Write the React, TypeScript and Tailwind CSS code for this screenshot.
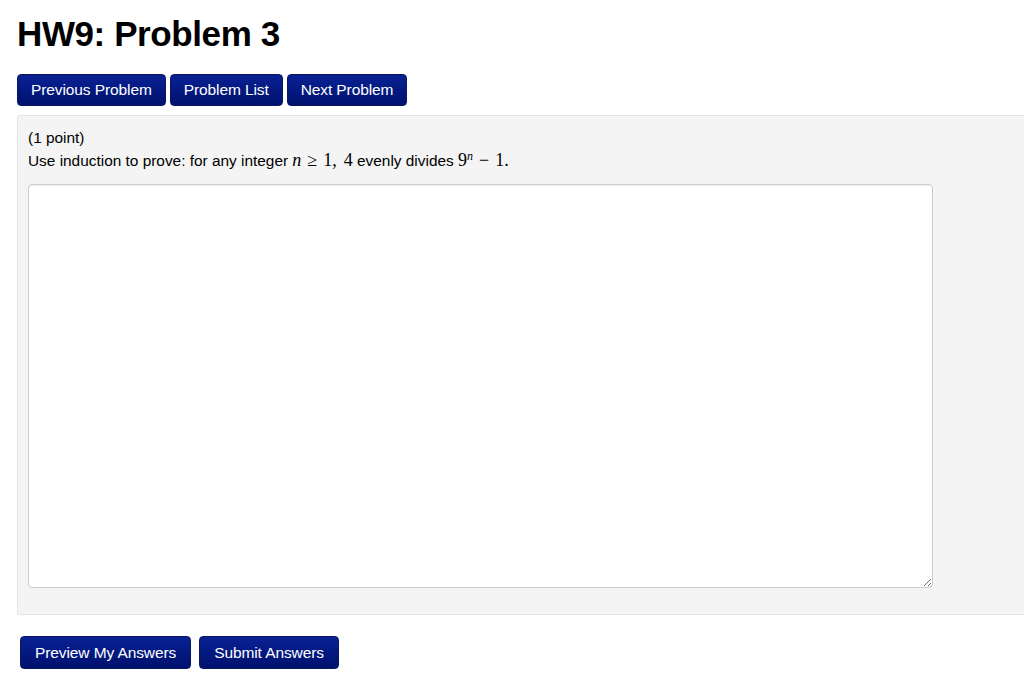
import React from 'react';

const btn =
  'h-[32px] px-[13px] rounded-[4px] border border-[#0a1660] bg-gradient-to-b from-[#0a2194] to-[#00116e] text-white text-[15.5px] leading-none tracking-[-0.1px]';

const App: React.FC = () => {
  return (
    <div className="w-[1024px] h-[674px] overflow-hidden bg-white text-black font-['Liberation_Sans',Arial,sans-serif]">
      <div className="pl-[17px] pt-[12px]">
        <h1 className="text-[35px] font-bold leading-[44px] tracking-[-0.4px]">HW9: Problem 3</h1>

        <div className="flex gap-[4px] mt-[18px]">
          <button className={btn}>Previous Problem</button>
          <button className={btn}>Problem List</button>
          <button className={btn}>Next Problem</button>
        </div>

        <div className="mt-[9px] w-[1020px] h-[500px] bg-[#f4f4f4] border border-[#e3e3e3] rounded-[2px] pl-[10px] pt-[10px]">
          <p className="text-[15.4px] leading-[23px]">(1 point)</p>
          <p className="text-[15.4px] leading-[23px]">
            Use induction to prove: for any integer{' '}
            <span className="font-['Liberation_Serif',serif] text-[18px]">
              <i>n</i>
              <span className="mx-[6px]">≥</span>1,<span className="ml-[7px]">4</span>
            </span>{' '}
            evenly divides{' '}
            <span className="font-['Liberation_Serif',serif] text-[18px]">
              9<sup className="text-[12px] italic">n</sup>
              <span className="mx-[6px]">−</span>1.
            </span>
          </p>
          <textarea className="block mt-[12px] w-[905px] h-[404px] bg-white border border-[#cccccc] rounded-[4px] shadow-[inset_0_1px_1px_rgba(0,0,0,0.08)] outline-none" />
        </div>

        <div className="flex gap-[8px] mt-[21px] pl-[3px]">
          <button className={btn + ' h-[33px] px-[14px]'}>Preview My Answers</button>
          <button className={btn + ' h-[33px] px-[14px]'}>Submit Answers</button>
        </div>
      </div>
    </div>
  );
};

export default App;
